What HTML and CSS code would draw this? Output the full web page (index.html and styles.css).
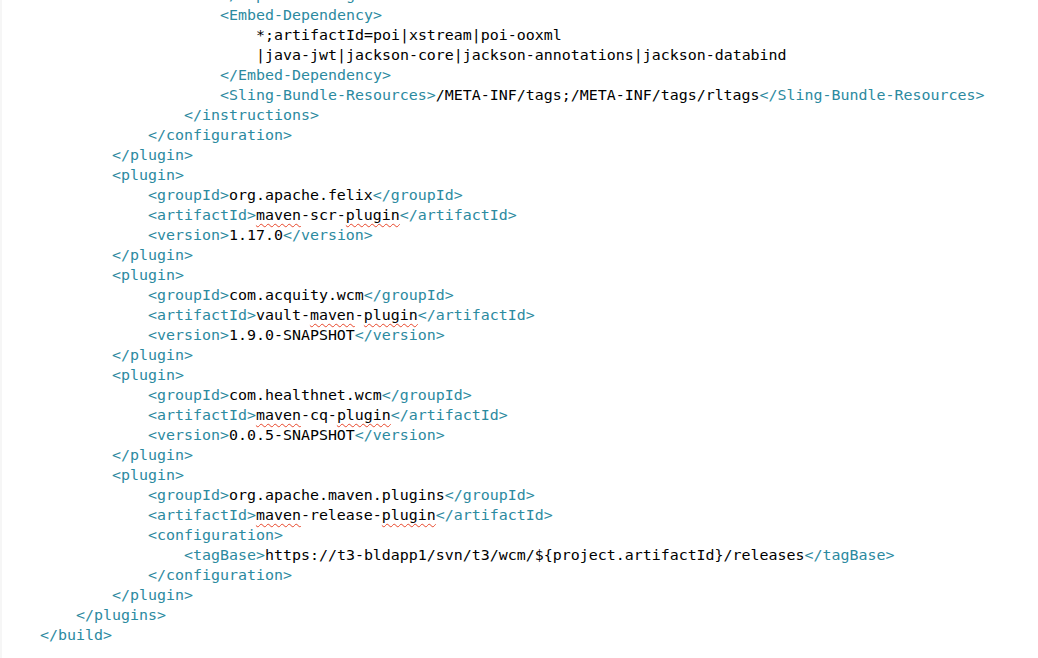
FILE: index.html
```html
<!DOCTYPE html>
<html>
<head>
<meta charset="utf-8">
<link rel="stylesheet" href="styles.css">
</head>
<body>
<div class="editor">
<div class="code">
<div class="ln l5 cut"><span class="t">&lt;/Import-Package&gt;</span></div>
<div class="ln l5"><span class="t">&lt;Embed-Dependency&gt;</span></div>
<div class="ln l6">*;artifactId=poi|xstream|poi-ooxml</div>
<div class="ln l6">|java-jwt|jackson-core|jackson-annotations|jackson-databind</div>
<div class="ln l5"><span class="t">&lt;/Embed-Dependency&gt;</span></div>
<div class="ln l5"><span class="t">&lt;Sling-Bundle-Resources&gt;</span>/META-INF/tags;/META-INF/tags/rltags<span class="t">&lt;/Sling-Bundle-Resources&gt;</span></div>
<div class="ln l4"><span class="t">&lt;/instructions&gt;</span></div>
<div class="ln l3"><span class="t">&lt;/configuration&gt;</span></div>
<div class="ln l2"><span class="t">&lt;/plugin&gt;</span></div>
<div class="ln l2"><span class="t">&lt;plugin&gt;</span></div>
<div class="ln l3"><span class="t">&lt;groupId&gt;</span>org.apache.felix<span class="t">&lt;/groupId&gt;</span></div>
<div class="ln l3"><span class="t">&lt;artifactId&gt;</span><span class="sp">maven</span>-scr-<span class="sp">plugin</span><span class="t">&lt;/artifactId&gt;</span></div>
<div class="ln l3"><span class="t">&lt;version&gt;</span>1.17.0<span class="t">&lt;/version&gt;</span></div>
<div class="ln l2"><span class="t">&lt;/plugin&gt;</span></div>
<div class="ln l2"><span class="t">&lt;plugin&gt;</span></div>
<div class="ln l3"><span class="t">&lt;groupId&gt;</span>com.acquity.wcm<span class="t">&lt;/groupId&gt;</span></div>
<div class="ln l3"><span class="t">&lt;artifactId&gt;</span>vault-<span class="sp">maven</span>-<span class="sp">plugin</span><span class="t">&lt;/artifactId&gt;</span></div>
<div class="ln l3"><span class="t">&lt;version&gt;</span>1.9.0-SNAPSHOT<span class="t">&lt;/version&gt;</span></div>
<div class="ln l2"><span class="t">&lt;/plugin&gt;</span></div>
<div class="ln l2"><span class="t">&lt;plugin&gt;</span></div>
<div class="ln l3"><span class="t">&lt;groupId&gt;</span>com.healthnet.wcm<span class="t">&lt;/groupId&gt;</span></div>
<div class="ln l3"><span class="t">&lt;artifactId&gt;</span><span class="sp">maven</span>-cq-<span class="sp">plugin</span><span class="t">&lt;/artifactId&gt;</span></div>
<div class="ln l3"><span class="t">&lt;version&gt;</span>0.0.5-SNAPSHOT<span class="t">&lt;/version&gt;</span></div>
<div class="ln l2"><span class="t">&lt;/plugin&gt;</span></div>
<div class="ln l2"><span class="t">&lt;plugin&gt;</span></div>
<div class="ln l3"><span class="t">&lt;groupId&gt;</span>org.apache.maven.plugins<span class="t">&lt;/groupId&gt;</span></div>
<div class="ln l3"><span class="t">&lt;artifactId&gt;</span><span class="sp">maven</span>-release-<span class="sp">plugin</span><span class="t">&lt;/artifactId&gt;</span></div>
<div class="ln l3"><span class="t">&lt;configuration&gt;</span></div>
<div class="ln l4"><span class="t">&lt;tagBase&gt;</span>https://t3-bldapp1/svn/t3/wcm/${project.artifactId}/releases<span class="t">&lt;/tagBase&gt;</span></div>
<div class="ln l3"><span class="t">&lt;/configuration&gt;</span></div>
<div class="ln l2"><span class="t">&lt;/plugin&gt;</span></div>
<div class="ln l1"><span class="t">&lt;/plugins&gt;</span></div>
<div class="ln l0"><span class="t">&lt;/build&gt;</span></div>
</div>
</div>
</body>
</html>
```
FILE: styles.css
```css
html, body {
  margin: 0;
  padding: 0;
  background: #ffffff;
}
.editor {
  width: 1038px;
  height: 658px;
  overflow: hidden;
  background: #ffffff;
  border-left: 2px solid #f6f6f6;
  box-sizing: border-box;
}
.code {
  margin-top: -15px;
  padding-left: 38px;
  font-family: "DejaVu Sans Mono", "Liberation Mono", monospace;
  font-size: 14.95px;
  line-height: 20px;
  color: #000000;
}
.ln {
  white-space: pre;
  height: 20px;
}
.l0 { padding-left: 0; }
.l1 { padding-left: 36px; }
.l2 { padding-left: 72px; }
.l3 { padding-left: 108px; }
.l4 { padding-left: 144px; }
.l5 { padding-left: 180px; }
.l6 { padding-left: 216px; }
.t {
  color: #2c8a9f;
}
.sp {
  text-decoration: underline wavy #e8462a;
  text-decoration-thickness: 1px;
  text-underline-offset: 3px;
}
```
